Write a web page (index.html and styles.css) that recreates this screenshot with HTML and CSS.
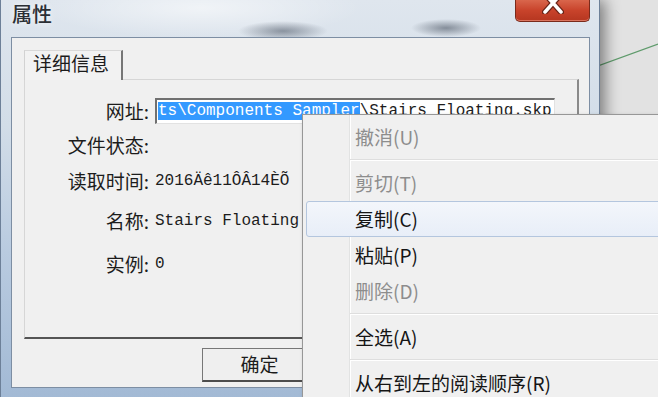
FILE: index.html
```html
<!DOCTYPE html>
<html lang="zh-CN">
<head>
    <meta charset="UTF-8">
    <title>属性</title>
    <link rel="stylesheet" href="styles.css">
</head>
<body>
<div class="desktop">
    <svg class="viewport-line" width="60" height="120" viewBox="0 0 60 120">
        <line x1="0" y1="66" x2="60" y2="44" stroke="#5f9b6c" stroke-width="1.2"/>
    </svg>

    <div class="window">
        <div class="titlebar">
            <span class="title">属性</span>
            <div class="close-btn">
                <svg width="22" height="14" viewBox="0 0 22 14">
                    <path d="M3 -6 L19 12 M19 -6 L3 12" stroke="#6a2418" stroke-width="6" stroke-linecap="round"/>
                    <path d="M3 -6 L19 12 M19 -6 L3 12" stroke="#fff" stroke-width="3.5" stroke-linecap="round"/>
                </svg>
            </div>
        </div>

        <div class="client">
            <div class="tabs">
                <div class="tab">详细信息</div>
            </div>
            <div class="tab-panel">
                <div class="props">
                    <div class="prop-label">网址:</div>
                    <div class="prop-value">
                        <div class="path-field"><span class="sel">ts\Components Sampler</span>\Stairs Floating.skp</div>
                    </div>

                    <div class="prop-label">文件状态:</div>
                    <div class="prop-value"></div>

                    <div class="prop-label">读取时间:</div>
                    <div class="prop-value mono">2016Äê11ÔÂ14ÈÕ</div>

                    <div class="prop-label">名称:</div>
                    <div class="prop-value mono">Stairs Floating</div>

                    <div class="prop-label">实例:</div>
                    <div class="prop-value mono">0</div>
                </div>
            </div>
            <div class="dialog-buttons">
                <div class="btn">确定</div>
            </div>
        </div>
    </div>

    <!--右键菜单-->
    <div class="context-menu">
        <div class="menu-item disabled">撤消(U)</div>
        <div class="menu-sep"></div>
        <div class="menu-item disabled">剪切(T)</div>
        <div class="menu-item hover">复制(C)</div>
        <div class="menu-item">粘贴(P)</div>
        <div class="menu-item disabled">删除(D)</div>
        <div class="menu-sep"></div>
        <div class="menu-item">全选(A)</div>
        <div class="menu-sep"></div>
        <div class="menu-item">从右到左的阅读顺序(R)</div>
    </div>
</div>
</body>
</html>
```

FILE: styles.css
```css
* {
    box-sizing: border-box;
}

body {
    margin: 0;
    padding: 0;
    font-family: "Noto Sans CJK SC", "Noto Sans", sans-serif;
    color: #1c1c1c;
}

.desktop {
    position: relative;
    width: 658px;
    height: 397px;
    overflow: hidden;
    background: #e2e2e2;
}

.viewport-line {
    position: absolute;
    left: 598px;
    top: 0;
}

/* 窗口 */
.window {
    position: absolute;
    left: 0;
    top: 0;
    width: 600px;
    height: 420px;
    display: flex;
    flex-direction: column;
    padding: 0 9px 0 10px;
    border: 1px solid #6d8098;
    border-top: none;
    box-shadow: 5px 0 14px rgba(0, 0, 0, 0.45);
    background:
        radial-gradient(ellipse 45px 10px at 282px 31px, rgba(70, 80, 95, 0.55), transparent),
        radial-gradient(ellipse 35px 9px at 445px 28px, rgba(60, 70, 85, 0.55), transparent),
        radial-gradient(ellipse 160px 30px at 200px 8px, rgba(255, 255, 255, 0.55), transparent),
        linear-gradient(to bottom, #dfe6ee 0%, #d2dde8 30%, #b9cbe0 60%, #9fb7d3 100%);
}

.titlebar {
    position: relative;
    height: 37px;
    flex-shrink: 0;
}

.title {
    display: block;
    padding: 2px 0 0 1px;
    font-size: 20px;
    font-weight: 500;
    line-height: 24px;
    color: #2b2f35;
    text-shadow: 0 0 6px rgba(255, 255, 255, 0.9);
}

.close-btn {
    position: absolute;
    left: 504px;
    top: 0;
    width: 75px;
    height: 22px;
    border: 1px solid #7a2a1b;
    border-top: none;
    border-radius: 0 0 5px 5px;
    background: linear-gradient(to bottom, #d9664c 0%, #c8432b 50%, #b53620 100%);
    box-shadow: inset 0 -1px 0 rgba(255, 180, 160, 0.5);
    text-align: center;
}

.close-btn svg {
    display: block;
    margin: 0 auto;
}

/* 客户区 */
.client {
    height: 351px;
    flex-shrink: 0;
    display: flex;
    flex-direction: column;
    padding: 12px 10px 0 12px;
    border: 1px solid #7d8ea3;
    background: #f0f0f0;
}

.tabs {
    display: flex;
    height: 29px;
    position: relative;
    z-index: 1;
}

.tab {
    width: 99px;
    height: 30px;
    padding: 0 0 0 8px;
    font-size: 19px;
    line-height: 24px;
    border-left: 1px solid #d2d2d2;
    border-top: 1px solid #d8d8d8;
    border-right: 2px solid #767676;
    background: #f2f2f2;
}

.tab-panel {
    height: 260px;
    border-top: 1px solid #d6d6d6;
    border-left: 1px solid #d6d6d6;
    border-right: 2px solid #8a8a8a;
    border-bottom: 2px solid #555555;
    background: #f0f0f0;
}

.props {
    display: grid;
    grid-template-columns: 124px 1fr;
    grid-template-rows: 30px 38px 34px 46px 40px;
    column-gap: 6px;
    padding-top: 16px;
}

.prop-label {
    font-size: 19px;
    text-align: right;
    align-self: center;
    line-height: 24px;
}

.prop-value {
    align-self: center;
    line-height: 24px;
}

.mono {
    font-family: "Liberation Mono", "DejaVu Sans Mono", monospace;
    font-size: 16px;
}

.path-field {
    width: 400px;
    height: 26px;
    padding-left: 1px;
    overflow: hidden;
    white-space: nowrap;
    font-family: "Liberation Mono", "DejaVu Sans Mono", monospace;
    font-size: 16px;
    line-height: 22px;
    background: #ffffff;
    border-top: 2px solid #707070;
    border-left: 2px solid #707070;
    border-right: 1px solid #e2e2e2;
    border-bottom: 1px solid #e2e2e2;
}

.path-field .sel {
    background: #3399ff;
    color: #ffffff;
}

.dialog-buttons {
    display: flex;
    padding: 9px 0 0 178px;
}

.btn {
    width: 116px;
    height: 34px;
    font-size: 19px;
    line-height: 30px;
    text-align: center;
    border: 1px solid #777777;
    border-right: 2px solid #4d4d4d;
    border-bottom: 2px solid #4d4d4d;
    background: #efefef;
}

/* 右键菜单 */
.context-menu {
    position: absolute;
    left: 302px;
    top: 114px;
    width: 380px;
    height: 300px;
    padding: 4px 3px;
    border: 1px solid #979797;
    box-shadow: 2px 2px 4px rgba(0, 0, 0, 0.3);
    background:
        linear-gradient(to right, transparent 46px, #e2e3e3 46px, #e2e3e3 47px, #ffffff 47px, #ffffff 48px, transparent 48px),
        #f0f0f0;
}

.menu-item {
    height: 36px;
    padding-left: 48px;
    font-size: 19px;
    line-height: 34px;
    color: #151515;
    border: 1px solid transparent;
    border-radius: 3px;
}

.menu-item.disabled {
    color: #8d8d8d;
}

.menu-item.hover {
    border-color: #b4c6de;
    background: linear-gradient(to bottom, #f3f6fb 0%, #e8eef8 100%);
}

.menu-sep {
    height: 2px;
    margin: 4px 0 4px 44px;
    border-top: 1px solid #dedede;
    border-bottom: 1px solid #ffffff;
}
```
